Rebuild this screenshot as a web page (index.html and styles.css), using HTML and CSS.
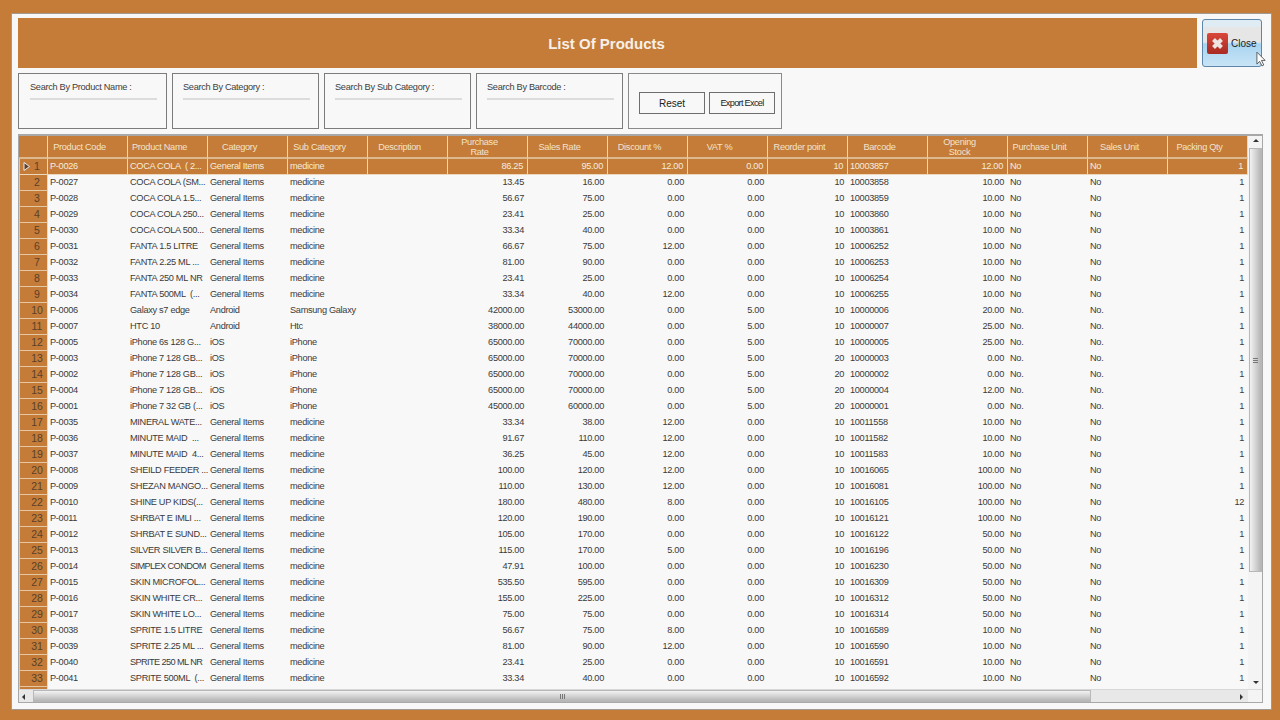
FILE: index.html
```html
<!DOCTYPE html>
<html lang="en">
<head>
<meta charset="utf-8">
<title>List Of Products</title>
<link rel="stylesheet" href="styles.css">
</head>
<body>
<div class="window">
  <div class="top">
    <h1 class="title">List Of Products</h1>
    <button class="close"><svg class="x-icon" viewBox="0 0 21 21"><defs><linearGradient id="xg" x1="0" y1="0" x2="0" y2="1"><stop offset="0" stop-color="#d9483a"/><stop offset="1" stop-color="#a92a22"/></linearGradient></defs><rect width="21" height="21" rx="2" fill="url(#xg)"/><path d="M6.500 6.500l8 8M14.500 6.500l-8 8" stroke="#f0e4e2" stroke-width="4"/></svg><span>Close</span></button>
  </div>
  <div class="filters">
    <div class="box"><label>Search By Product Name :</label><div class="rule"></div></div>
    <div class="box"><label>Search By Category :</label><div class="rule"></div></div>
    <div class="box"><label>Search By Sub Category :</label><div class="rule"></div></div>
    <div class="box"><label>Search By Barcode :</label><div class="rule"></div></div>
    <div class="box actions"><button class="btn">Reset</button><button class="btn btn-tight">Export Excel</button></div>
  </div>
  <div class="grid">
    <div class="grid-main">
      <table>
        <thead><tr><th class="rh"></th><th>Product Code</th><th>Product Name</th><th>Category</th><th>Sub Category</th><th>Description</th><th>Purchase<br>Rate</th><th>Sales Rate</th><th>Discount %</th><th>VAT %</th><th>Reorder point</th><th>Barcode</th><th>Opening<br>Stock</th><th>Purchase Unit</th><th>Sales Unit</th><th>Packing Qty</th></tr></thead>
        <tbody>
<tr class="sel"><td class="rh"><svg class="ptr" viewBox="0 0 7 9"><path d="M1 .5L6.500 4.500 1 8.500z" fill="#5a4028" stroke="#eee"/></svg>1</td><td>P-0026</td><td>COCA COLA  ( 2...</td><td>General Items</td><td>medicine</td><td></td><td class="n">86.25</td><td class="n">95.00</td><td class="n">12.00</td><td class="n">0.00</td><td class="n">10</td><td>10003857</td><td class="n">12.00</td><td>No</td><td>No</td><td class="n">1</td></tr>
<tr><td class="rh">2</td><td>P-0027</td><td>COCA COLA (SM...</td><td>General Items</td><td>medicine</td><td></td><td class="n">13.45</td><td class="n">16.00</td><td class="n">0.00</td><td class="n">0.00</td><td class="n">10</td><td>10003858</td><td class="n">10.00</td><td>No</td><td>No</td><td class="n">1</td></tr>
<tr><td class="rh">3</td><td>P-0028</td><td>COCA COLA 1.5...</td><td>General Items</td><td>medicine</td><td></td><td class="n">56.67</td><td class="n">75.00</td><td class="n">0.00</td><td class="n">0.00</td><td class="n">10</td><td>10003859</td><td class="n">10.00</td><td>No</td><td>No</td><td class="n">1</td></tr>
<tr><td class="rh">4</td><td>P-0029</td><td>COCA COLA 250...</td><td>General Items</td><td>medicine</td><td></td><td class="n">23.41</td><td class="n">25.00</td><td class="n">0.00</td><td class="n">0.00</td><td class="n">10</td><td>10003860</td><td class="n">10.00</td><td>No</td><td>No</td><td class="n">1</td></tr>
<tr><td class="rh">5</td><td>P-0030</td><td>COCA COLA 500...</td><td>General Items</td><td>medicine</td><td></td><td class="n">33.34</td><td class="n">40.00</td><td class="n">0.00</td><td class="n">0.00</td><td class="n">10</td><td>10003861</td><td class="n">10.00</td><td>No</td><td>No</td><td class="n">1</td></tr>
<tr><td class="rh">6</td><td>P-0031</td><td>FANTA 1.5 LITRE</td><td>General Items</td><td>medicine</td><td></td><td class="n">66.67</td><td class="n">75.00</td><td class="n">12.00</td><td class="n">0.00</td><td class="n">10</td><td>10006252</td><td class="n">10.00</td><td>No</td><td>No</td><td class="n">1</td></tr>
<tr><td class="rh">7</td><td>P-0032</td><td>FANTA 2.25 ML ...</td><td>General Items</td><td>medicine</td><td></td><td class="n">81.00</td><td class="n">90.00</td><td class="n">0.00</td><td class="n">0.00</td><td class="n">10</td><td>10006253</td><td class="n">10.00</td><td>No</td><td>No</td><td class="n">1</td></tr>
<tr><td class="rh">8</td><td>P-0033</td><td>FANTA 250 ML NR</td><td>General Items</td><td>medicine</td><td></td><td class="n">23.41</td><td class="n">25.00</td><td class="n">0.00</td><td class="n">0.00</td><td class="n">10</td><td>10006254</td><td class="n">10.00</td><td>No</td><td>No</td><td class="n">1</td></tr>
<tr><td class="rh">9</td><td>P-0034</td><td>FANTA 500ML  (...</td><td>General Items</td><td>medicine</td><td></td><td class="n">33.34</td><td class="n">40.00</td><td class="n">12.00</td><td class="n">0.00</td><td class="n">10</td><td>10006255</td><td class="n">10.00</td><td>No</td><td>No</td><td class="n">1</td></tr>
<tr><td class="rh">10</td><td>P-0006</td><td>Galaxy s7 edge</td><td>Android</td><td>Samsung Galaxy</td><td></td><td class="n">42000.00</td><td class="n">53000.00</td><td class="n">0.00</td><td class="n">5.00</td><td class="n">10</td><td>10000006</td><td class="n">20.00</td><td>No.</td><td>No.</td><td class="n">1</td></tr>
<tr><td class="rh">11</td><td>P-0007</td><td>HTC 10</td><td>Android</td><td>Htc</td><td></td><td class="n">38000.00</td><td class="n">44000.00</td><td class="n">0.00</td><td class="n">5.00</td><td class="n">10</td><td>10000007</td><td class="n">25.00</td><td>No.</td><td>No.</td><td class="n">1</td></tr>
<tr><td class="rh">12</td><td>P-0005</td><td>iPhone 6s 128 G...</td><td>iOS</td><td>iPhone</td><td></td><td class="n">65000.00</td><td class="n">70000.00</td><td class="n">0.00</td><td class="n">5.00</td><td class="n">10</td><td>10000005</td><td class="n">25.00</td><td>No.</td><td>No.</td><td class="n">1</td></tr>
<tr><td class="rh">13</td><td>P-0003</td><td>iPhone 7 128 GB...</td><td>iOS</td><td>iPhone</td><td></td><td class="n">65000.00</td><td class="n">70000.00</td><td class="n">0.00</td><td class="n">5.00</td><td class="n">20</td><td>10000003</td><td class="n">0.00</td><td>No.</td><td>No.</td><td class="n">1</td></tr>
<tr><td class="rh">14</td><td>P-0002</td><td>iPhone 7 128 GB...</td><td>iOS</td><td>iPhone</td><td></td><td class="n">65000.00</td><td class="n">70000.00</td><td class="n">0.00</td><td class="n">5.00</td><td class="n">20</td><td>10000002</td><td class="n">0.00</td><td>No.</td><td>No.</td><td class="n">1</td></tr>
<tr><td class="rh">15</td><td>P-0004</td><td>iPhone 7 128 GB...</td><td>iOS</td><td>iPhone</td><td></td><td class="n">65000.00</td><td class="n">70000.00</td><td class="n">0.00</td><td class="n">5.00</td><td class="n">20</td><td>10000004</td><td class="n">12.00</td><td>No.</td><td>No.</td><td class="n">1</td></tr>
<tr><td class="rh">16</td><td>P-0001</td><td>iPhone 7 32 GB (...</td><td>iOS</td><td>iPhone</td><td></td><td class="n">45000.00</td><td class="n">60000.00</td><td class="n">0.00</td><td class="n">5.00</td><td class="n">20</td><td>10000001</td><td class="n">0.00</td><td>No.</td><td>No.</td><td class="n">1</td></tr>
<tr><td class="rh">17</td><td>P-0035</td><td>MINERAL WATE...</td><td>General Items</td><td>medicine</td><td></td><td class="n">33.34</td><td class="n">38.00</td><td class="n">12.00</td><td class="n">0.00</td><td class="n">10</td><td>10011558</td><td class="n">10.00</td><td>No</td><td>No</td><td class="n">1</td></tr>
<tr><td class="rh">18</td><td>P-0036</td><td>MINUTE MAID  ...</td><td>General Items</td><td>medicine</td><td></td><td class="n">91.67</td><td class="n">110.00</td><td class="n">12.00</td><td class="n">0.00</td><td class="n">10</td><td>10011582</td><td class="n">10.00</td><td>No</td><td>No</td><td class="n">1</td></tr>
<tr><td class="rh">19</td><td>P-0037</td><td>MINUTE MAID  4...</td><td>General Items</td><td>medicine</td><td></td><td class="n">36.25</td><td class="n">45.00</td><td class="n">12.00</td><td class="n">0.00</td><td class="n">10</td><td>10011583</td><td class="n">10.00</td><td>No</td><td>No</td><td class="n">1</td></tr>
<tr><td class="rh">20</td><td>P-0008</td><td>SHEILD FEEDER ...</td><td>General Items</td><td>medicine</td><td></td><td class="n">100.00</td><td class="n">120.00</td><td class="n">12.00</td><td class="n">0.00</td><td class="n">10</td><td>10016065</td><td class="n">100.00</td><td>No</td><td>No</td><td class="n">1</td></tr>
<tr><td class="rh">21</td><td>P-0009</td><td>SHEZAN MANGO...</td><td>General Items</td><td>medicine</td><td></td><td class="n">110.00</td><td class="n">130.00</td><td class="n">12.00</td><td class="n">0.00</td><td class="n">10</td><td>10016081</td><td class="n">100.00</td><td>No</td><td>No</td><td class="n">1</td></tr>
<tr><td class="rh">22</td><td>P-0010</td><td>SHINE UP KIDS(...</td><td>General Items</td><td>medicine</td><td></td><td class="n">180.00</td><td class="n">480.00</td><td class="n">8.00</td><td class="n">0.00</td><td class="n">10</td><td>10016105</td><td class="n">100.00</td><td>No</td><td>No</td><td class="n">12</td></tr>
<tr><td class="rh">23</td><td>P-0011</td><td>SHRBAT E IMLI ...</td><td>General Items</td><td>medicine</td><td></td><td class="n">120.00</td><td class="n">190.00</td><td class="n">0.00</td><td class="n">0.00</td><td class="n">10</td><td>10016121</td><td class="n">100.00</td><td>No</td><td>No</td><td class="n">1</td></tr>
<tr><td class="rh">24</td><td>P-0012</td><td>SHRBAT E SUND...</td><td>General Items</td><td>medicine</td><td></td><td class="n">105.00</td><td class="n">170.00</td><td class="n">0.00</td><td class="n">0.00</td><td class="n">10</td><td>10016122</td><td class="n">50.00</td><td>No</td><td>No</td><td class="n">1</td></tr>
<tr><td class="rh">25</td><td>P-0013</td><td>SILVER SILVER B...</td><td>General Items</td><td>medicine</td><td></td><td class="n">115.00</td><td class="n">170.00</td><td class="n">5.00</td><td class="n">0.00</td><td class="n">10</td><td>10016196</td><td class="n">50.00</td><td>No</td><td>No</td><td class="n">1</td></tr>
<tr><td class="rh">26</td><td>P-0014</td><td class="tight">SIMPLEX CONDOM</td><td>General Items</td><td>medicine</td><td></td><td class="n">47.91</td><td class="n">100.00</td><td class="n">0.00</td><td class="n">0.00</td><td class="n">10</td><td>10016230</td><td class="n">50.00</td><td>No</td><td>No</td><td class="n">1</td></tr>
<tr><td class="rh">27</td><td>P-0015</td><td>SKIN MICROFOL...</td><td>General Items</td><td>medicine</td><td></td><td class="n">535.50</td><td class="n">595.00</td><td class="n">0.00</td><td class="n">0.00</td><td class="n">10</td><td>10016309</td><td class="n">50.00</td><td>No</td><td>No</td><td class="n">1</td></tr>
<tr><td class="rh">28</td><td>P-0016</td><td>SKIN WHITE CR...</td><td>General Items</td><td>medicine</td><td></td><td class="n">155.00</td><td class="n">225.00</td><td class="n">0.00</td><td class="n">0.00</td><td class="n">10</td><td>10016312</td><td class="n">50.00</td><td>No</td><td>No</td><td class="n">1</td></tr>
<tr><td class="rh">29</td><td>P-0017</td><td>SKIN WHITE LO...</td><td>General Items</td><td>medicine</td><td></td><td class="n">75.00</td><td class="n">75.00</td><td class="n">0.00</td><td class="n">0.00</td><td class="n">10</td><td>10016314</td><td class="n">50.00</td><td>No</td><td>No</td><td class="n">1</td></tr>
<tr><td class="rh">30</td><td>P-0038</td><td>SPRITE 1.5 LITRE</td><td>General Items</td><td>medicine</td><td></td><td class="n">56.67</td><td class="n">75.00</td><td class="n">8.00</td><td class="n">0.00</td><td class="n">10</td><td>10016589</td><td class="n">10.00</td><td>No</td><td>No</td><td class="n">1</td></tr>
<tr><td class="rh">31</td><td>P-0039</td><td>SPRITE 2.25 ML ...</td><td>General Items</td><td>medicine</td><td></td><td class="n">81.00</td><td class="n">90.00</td><td class="n">12.00</td><td class="n">0.00</td><td class="n">10</td><td>10016590</td><td class="n">10.00</td><td>No</td><td>No</td><td class="n">1</td></tr>
<tr><td class="rh">32</td><td>P-0040</td><td class="tight">SPRITE 250 ML NR</td><td>General Items</td><td>medicine</td><td></td><td class="n">23.41</td><td class="n">25.00</td><td class="n">0.00</td><td class="n">0.00</td><td class="n">10</td><td>10016591</td><td class="n">10.00</td><td>No</td><td>No</td><td class="n">1</td></tr>
<tr><td class="rh">33</td><td>P-0041</td><td>SPRITE 500ML  (...</td><td>General Items</td><td>medicine</td><td></td><td class="n">33.34</td><td class="n">40.00</td><td class="n">0.00</td><td class="n">0.00</td><td class="n">10</td><td>10016592</td><td class="n">10.00</td><td>No</td><td>No</td><td class="n">1</td></tr>
<tr><td class="rh"></td></tr>
        </tbody>
      </table>
      <div class="vscroll">
        <div class="arrow up"></div>
        <div class="vthumb"><i></i></div>
        <div class="vtrack"></div>
        <div class="arrow down"></div>
      </div>
    </div>
    <div class="hscroll">
      <div class="arrow left"></div>
      <div class="hthumb"><i></i></div>
      <div class="htrack"></div>
      <div class="arrow right"></div>
      <div class="corner"></div>
    </div>
  </div>
</div>
<svg class="cursor" viewBox="0 0 12 18"><path d="M1 1v13l3-3 2.500 5 2-1-2.500-5h4z" fill="#fff" stroke="#555" stroke-width="1"/></svg>
</body>
</html>
```
FILE: styles.css
```css
* { box-sizing: border-box; }
html, body { margin: 0; height: 100%; }
body {
  background: #c47c38;
  padding: 13px 8px 10px 11px;
  font-family: "Liberation Sans", Arial, sans-serif;
  font-size: 9.2px;
  letter-spacing: -0.3px;
  color: #333;
  overflow: hidden;
}
.window {
  height: 697px;
  background: #f8f8f8;
  border: 1px solid #a09a92;
  padding: 4px 8px 0 6px;
  display: flex;
  flex-direction: column;
}
.top { display: flex; gap: 5px; height: 50px; }
.title {
  flex: 0 0 1179px;
  margin: 0;
  background: #c47c38;
  color: #f6f0e8;
  font-size: 15px;
  font-weight: bold;
  letter-spacing: 0;
  line-height: 51px;
  text-align: center;
  padding-right: 2px;
}
.close {
  flex: 1;
  margin: 1px 1px 0 0;
  height: 48px;
  border: 1px solid #5d86a8;
  border-radius: 3px;
  background: linear-gradient(#e0ecf4 0, #e0ecf4 15%, #e6e6e6 15%, #e6e6e6 48%, #a8d4f0 52%, #c8e4f6 100%);
  display: flex;
  align-items: center;
  padding: 0 0 0 4px;
  gap: 3px;
  font: 10px "Liberation Sans", Arial, sans-serif;
  color: #222;
}
.x-icon { width: 21px; height: 21px; flex: none; }
.filters { display: flex; gap: 5px; margin-top: 5px; height: 56px; }
.box {
  width: 147px;
  border: 1px solid #7c7c7c;
  padding: 7px 8px 0 10px;
  color: #3c3c3c;
}
.box:first-child { width: 149px; padding: 7px 9px 0 11px; }
.box label { display: block; line-height: 12px; }
.rule { height: 2px; background: #dcdcdc; margin-top: 5px; }
.actions {
  width: 154px;
  border-color: #8a8a8a;
  display: flex;
  gap: 4px;
  padding: 18px 0 0 10px;
}
.btn {
  height: 22px;
  width: 66px;
  padding: 0;
  background: #f8f8f8;
  border: 1px solid #6e6e6e;
  font: 10px "Liberation Sans", Arial, sans-serif;
  color: #222;
}
.btn-tight { font-size: 9.2px; letter-spacing: -0.7px; }
.grid {
  margin-top: 5px;
  width: 1245px;
  height: 569px;
  border: 1px solid #a8a8a8;
  border-top-width: 2px;
  display: flex;
  flex-direction: column;
}
.grid-main { display: flex; height: 553px; overflow: hidden; }
table {
  border-collapse: separate;
  border-spacing: 0;
  table-layout: fixed;
  width: 1229px;
  height: 0;
  flex: none;
}
th {
  width: 80px;
  height: 23px;
  padding: 1px 16px 0 0;
  background: #c47c38;
  color: #f3e3cc;
  font-weight: normal;
  line-height: 10px;
  text-align: center;
  border-right: 1px solid #ecd9bd;
  border-bottom: 2px solid #dcb98f;
}
th.rh { width: 29px; padding: 0; }
td {
  height: 16px;
  padding: 0 3px 0 2px;
  line-height: 15px;
  vertical-align: top;
  white-space: pre;
  overflow: hidden;
  color: #3a3a3a;
}
td.n { text-align: right; padding-right: 4px; }
td.tight { letter-spacing: -0.6px; }
td.rh {
  position: relative;
  background: #c47c38;
  border-left: 1px solid #e4c8a4;
  border-bottom: 1px solid #e4c8a4;
  border-right: 1px solid #ecd9bd;
  text-align: center;
  padding: 0 0 0 7px;
  color: #5a4028;
  font-size: 10.5px;
  letter-spacing: 0;
}
.sel td { background: #c47c38; color: #f6ecdd; border-right: 1px solid #ecd9bd; border-bottom: 1px solid #ecd9bd; }
.sel td.rh { color: #5a4028; }
.ptr { position: absolute; left: 3px; top: 3px; width: 7px; height: 9px; }
.vscroll { flex: 1; background: #f4f4f4; display: flex; flex-direction: column; }
.arrow { position: relative; flex: none; }
.arrow.up { height: 12px; }
.arrow.down { height: 14px; }
.arrow::after { content: ""; position: absolute; border: 3px solid transparent; }
.arrow.up::after { left: 5px; top: 3px; border-bottom-color: #333; border-top-width: 0; }
.arrow.down::after { left: 5px; top: 6px; border-top-color: #333; border-bottom-width: 0; }
.vthumb {
  height: 424px;
  margin-left: 1px;
  border: 1px solid #b8b8b8;
  background: linear-gradient(90deg, #f2f2f2, #d4d4d4 50%, #b4b4b4);
  display: flex;
  align-items: center;
  justify-content: center;
}
.vthumb i { width: 5px; height: 5px; background: repeating-linear-gradient(#777 0 1px, transparent 1px 2px); }
.vtrack { flex: 1; }
.hscroll { flex: 1; display: flex; background: #e8e8e8; border-top: 1px solid #d8d8d8; }
.arrow.left, .arrow.right { width: 14px; }
.arrow.left::after { left: 3px; top: 4px; border-right-color: #333; border-left-width: 0; }
.arrow.right::after { left: 6px; top: 4px; border-left-color: #333; border-right-width: 0; }
.hthumb {
  width: 1058px;
  border: 1px solid #b8b8b8;
  background: linear-gradient(#f2f2f2, #d4d4d4 50%, #b4b4b4);
  display: flex;
  align-items: center;
  justify-content: center;
}
.hthumb i { width: 5px; height: 5px; background: repeating-linear-gradient(90deg, #777 0 1px, transparent 1px 2px); }
.htrack { flex: 1; }
.corner { flex: 0 0 14px; background: #f4f4f4; }
.cursor { position: absolute; left: 1256px; top: 51px; width: 11px; height: 17px; }
```
